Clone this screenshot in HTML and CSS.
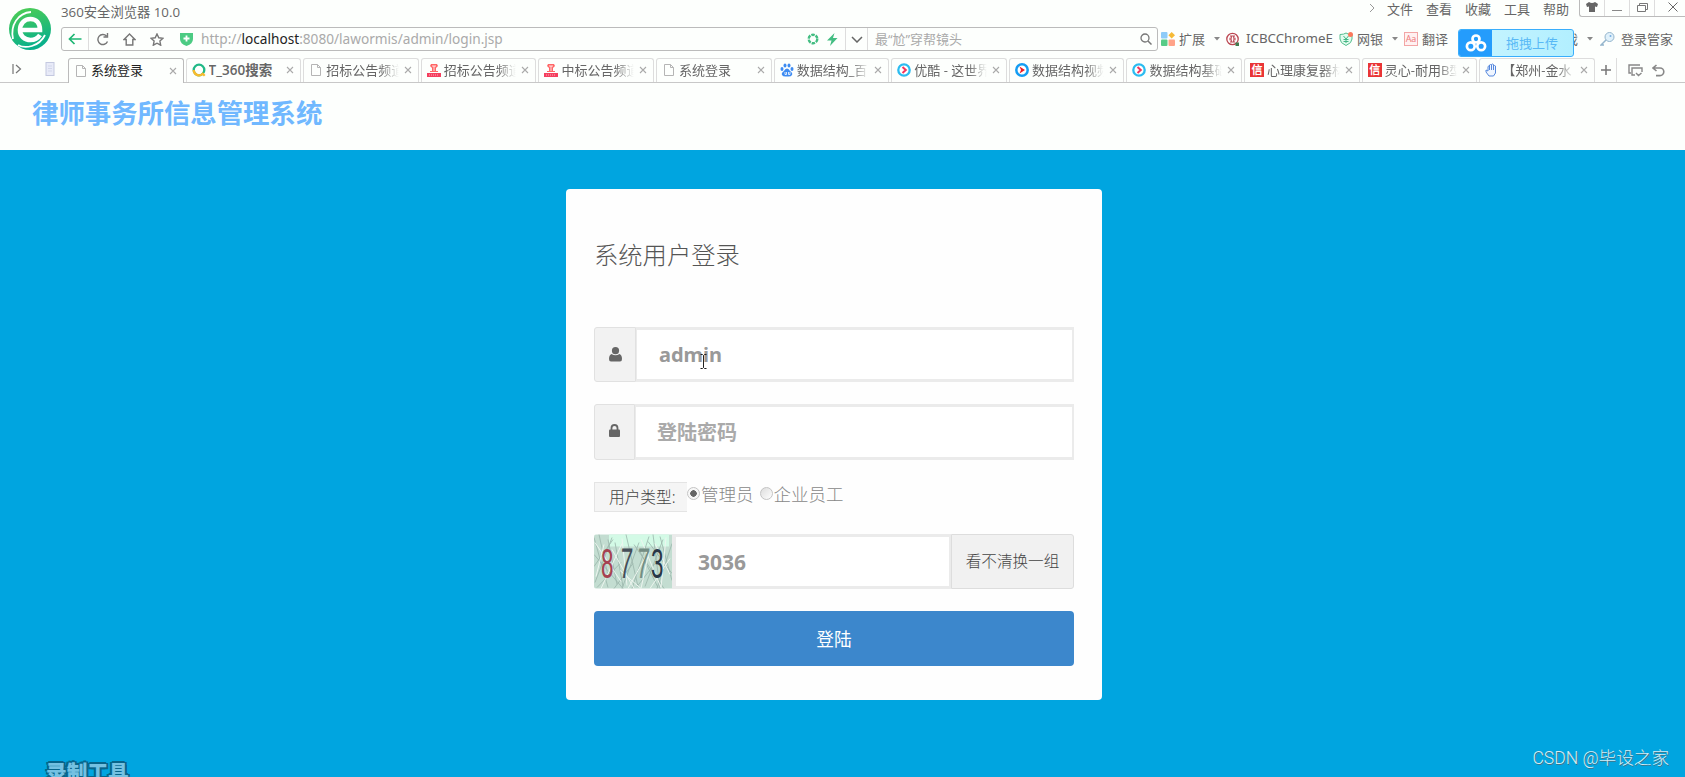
FILE: index.html
```html
<!DOCTYPE html>
<html lang="zh-CN">
<head>
  <meta charset="UTF-8">
  <title>系统登录</title>
  <link rel="stylesheet" href="styles.css">
</head>
<body>
  <svg class="symbols" width="0" height="0">
    <symbol id="page" viewBox="0 0 14 14"><path d="M2.500 1.500h6l3 3v8h-9z M8.500 1.500v3h3" fill="none" stroke="#b5b5b5"/></symbol>
    <symbol id="stamp" viewBox="0 0 14 14"><path d="M4 1h6l1 2-2 2v3h2v1H3V8h2V5L3 3z" fill="#f66"/><path d="M5 3h4M7 3v5" stroke="#fff" stroke-width=".8"/><path d="M0 10h14v4H0z" fill="#f43f5e"/><path d="M2 12h10" stroke="#fab" stroke-dasharray="1 1"/></symbol>
    <symbol id="play" viewBox="0 0 14 14"><circle cx="7" cy="7" r="5.700" fill="#fff" stroke="#2bbcf0" stroke-width="2.300"/><path d="M5.500 4l3.300 3-3.300 3" fill="none" stroke="#f4335c" stroke-width="2"/></symbol>
    <symbol id="play-red" viewBox="0 0 14 14"><circle cx="7" cy="7" r="5.700" fill="#fff" stroke="#149df3" stroke-width="2.500"/><path d="M4.500 3.500L10 7l-5.500 3.500L6 7z" fill="#f01a24"/></symbol>
    <symbol id="close" viewBox="0 0 8 8"><path d="M1 1l6 6M7 1L1 7" stroke="#aaa" stroke-width="1.100"/></symbol>
    <symbol id="caret" viewBox="0 0 6 4"><path d="M0 0h6L3 3.500z" fill="#888"/></symbol>
  </svg>

  <div class="browser">
    <div class="browser-top">
      <svg class="logo" viewBox="0 0 42 42">
        <defs><linearGradient id="green" x1="0" y1="0" x2="0.300" y2="1"><stop offset="0" stop-color="#52cf50"/><stop offset="1" stop-color="#09b08b"/></linearGradient></defs>
        <circle cx="21" cy="21" r="21" fill="url(#green)"/>
        <path d="M11 22H31C31 15 27 11 21.500 11C15 11 11 16 11 22C11 28 15.500 32 21.500 32C26 32 29 30 31 27" fill="none" stroke="#fff" stroke-width="4.600"/>
        <path d="M4 31C1 17 9 5 22 4M9 37C16 41 30 39 36 27" fill="none" stroke="#fff" stroke-width="1.800"/>
      </svg>
      <div class="browser-main">
        <div class="title-row">
          <span class="browser-name">360安全浏览器 10.0</span>
          <div class="menu">
            <svg width="6" height="10" viewBox="0 0 6 10"><path d="M1 1l4 4-4 4" fill="none" stroke="#999"/></svg>
            <span>文件</span><span>查看</span><span>收藏</span><span>工具</span><span>帮助</span>
          </div>
          <div class="window-buttons">
            <span><svg width="12" height="10" viewBox="0 0 12 10"><path d="M3 0q3 2 6 0l3 2-1 3-2-.5V10H3V4.500L1 5 0 2z" fill="#666"/></svg></span>
            <span><svg width="12" height="10" viewBox="0 0 12 10"><path d="M1 8.500h10" stroke="#888"/></svg></span>
            <span><svg width="12" height="10" viewBox="0 0 12 10"><path d="M1.500 3.500h8v6h-8zM3.500 3.500v-2h8v6h-2" fill="none" stroke="#777"/></svg></span>
            <span><svg width="10" height="10" viewBox="0 0 10 10"><path d="M.5.500l9 9M9.500.500l-9 9" stroke="#666"/></svg></span>
          </div>
        </div>

        <div class="address-row">
          <div class="address-bar">
            <span class="nav nav-back"><svg width="14" height="12" viewBox="0 0 14 12"><path d="M13.500 6H1.500M6.500 1L1.500 6l5 5" fill="none" stroke="#1db673" stroke-width="1.700"/></svg></span>
            <span class="nav"><svg width="12" height="13" viewBox="0 0 12 13"><path d="M9.500 3A5 5 0 1 0 10.500 8.500M10.500 0v4h-4" fill="none" stroke="#777" stroke-width="1.400"/></svg></span>
            <span class="nav"><svg width="13" height="13" viewBox="0 0 13 13"><path d="M1 6.500L6.500 1 12 6.500H9.800V12H3.200V6.500z" fill="none" stroke="#777" stroke-width="1.400"/></svg></span>
            <span class="nav"><svg width="14" height="13" viewBox="0 0 14 13"><path d="M7 1l1.800 3.800 4.200.5-3.100 2.800.8 4.100L7 10.200l-3.700 2 .8-4.100L1 5.300l4.200-.5z" fill="none" stroke="#777" stroke-width="1.400"/></svg></span>
            <svg class="shield" width="13" height="14" viewBox="0 0 13 14"><path d="M0 1h13v6q0 5-6.500 7Q0 12 0 7z" fill="#4ccb83"/><path d="M6.500 3.500v6M3.500 6.500h6" stroke="#fff" stroke-width="1.800"/></svg>
            <span class="url">http://<b>localhost</b>:8080/lawormis/admin/login.jsp</span>
            <svg class="turbo" width="12" height="12" viewBox="0 0 12 12"><circle cx="6" cy="6" r="4.300" fill="none" stroke="#43bd82" stroke-width="2.400" stroke-dasharray="3.500 1"/></svg>
            <svg class="bolt" width="11" height="13" viewBox="0 0 11 13"><path d="M7.500 0L0 7.500h4.500L3 13l7.500-8H6z" fill="#43bd82"/></svg>
            <span class="drop"><svg width="12" height="7" viewBox="0 0 12 7"><path d="M1 1l5 5 5-5" fill="none" stroke="#666" stroke-width="1.500"/></svg></span>
            <span class="search-hint">最“尬”穿帮镜头</span>
            <svg class="magnifier" width="12" height="12" viewBox="0 0 12 12"><circle cx="5" cy="5" r="4" fill="none" stroke="#777" stroke-width="1.300"/><path d="M8 8l3.500 3.500" stroke="#777" stroke-width="1.500"/></svg>
          </div>
          <div class="plugins">
            <svg width="14" height="14" viewBox="0 0 14 14"><rect width="6.500" height="6.500" rx="1" fill="#8ecbf8"/><rect y="7.500" width="6.500" height="6.500" rx="1" fill="#57cb87"/><rect x="7.500" y="7.500" width="6.500" height="6.500" rx="1" fill="#ffa389"/><path d="M10.700 0l3.300 3.300-3.300 3.300-3.300-3.300z" fill="#f6ba36"/></svg>
            <span class="plugin">扩展</span>
            <svg class="arrow" width="6" height="4"><use href="#caret"/></svg>
            <svg class="icbc" width="13" height="14" viewBox="0 0 13 14"><circle cx="6.500" cy="7" r="5.700" fill="#fff" stroke="#bb4650" stroke-width="1.300"/><path d="M4 4h5M4 10h5M5.300 4v2.300H3.300M7.700 4v2.300h2M5.300 10V7.700H3.300M7.700 10V7.700h2" fill="none" stroke="#bb4650" stroke-width="1.100"/><path d="M9.500 10.500H13V14H9.500z" fill="#417d50"/></svg>
            <span class="plugin plugin-icbc">ICBCChromeE</span>
            <svg class="bank" width="14" height="14" viewBox="0 0 14 14"><path d="M1 2.500Q5 2.500 7 1q2 1.500 6 1.500V7q0 4-6 6.500Q1 11 1 7z" fill="#e2fbee" stroke="#55be8e"/><path d="M4.500 4L7 7l2.500-3M7 7v4M4.500 7.500h5M4.500 9.500h5" stroke="#45b785" fill="none"/><circle cx="11.500" cy="2.500" r="2.500" fill="#fb795c"/></svg>
            <span class="plugin">网银</span>
            <svg class="arrow bank-arrow" width="6" height="4"><use href="#caret"/></svg>
            <span class="ad-icon">Aa</span>
            <span class="plugin">翻译</span>
            <span class="plugin plugin-game">戏</span>
            <svg class="arrow" width="6" height="4"><use href="#caret"/></svg>
            <svg class="key" width="15" height="14" viewBox="0 0 15 14"><circle cx="9.500" cy="5" r="4.500" fill="#e0f1fb" stroke="#94b5cc"/><circle cx="10.500" cy="4" r="1" fill="#77aee2"/><path d="M6 8l-5 5h3" fill="none" stroke="#94b5cc" stroke-width="1.500"/></svg>
            <span class="plugin plugin-login">登录管家</span>
          </div>
        </div>
      </div>

      <div class="upload">
        <span class="upload-icon"><svg width="22" height="18" viewBox="0 0 22 18"><g fill="none" stroke="#fff" stroke-width="2.700"><circle cx="11" cy="5" r="3.500"/><circle cx="5.800" cy="12.300" r="3.900"/><circle cx="16.200" cy="12.300" r="3.900"/></g></svg></span>
        <span class="upload-text">拖拽上传</span>
      </div>
    </div>

    <div class="tab-row">
      <div class="tab-tools">
        <svg width="10" height="10" viewBox="0 0 10 10"><path d="M1 0v10M4 1l4.500 4L4 9" fill="none" stroke="#777" stroke-width="1.200"/></svg>
        <svg width="10" height="14" viewBox="0 0 10 14"><rect x="1" y=".5" width="8" height="13" fill="#e8ebf8" stroke="#c4c9e0"/><path d="M3 4h4M3 6.500h4M3 9h4" stroke="#d2d7ea"/></svg>
      </div>
      <div class="tabs">
        <div class="tab active"><svg class="fav"><use href="#page"/></svg><span>系统登录</span><svg class="x"><use href="#close"/></svg></div>
        <div class="tab bold"><svg class="fav" viewBox="0 0 14 14"><circle cx="7" cy="7" r="5.300" fill="none" stroke="#20b987" stroke-width="2.300"/><path d="M1.700 7a5.300 5.300 0 0 0 9 3.800l2 2" fill="none" stroke="#f9bb2d" stroke-width="2.300"/></svg><span>T_360搜索</span><svg class="x"><use href="#close"/></svg></div>
        <div class="tab"><svg class="fav"><use href="#page"/></svg><span>招标公告频道</span><svg class="x"><use href="#close"/></svg></div>
        <div class="tab"><svg class="fav"><use href="#stamp"/></svg><span>招标公告频道</span><svg class="x"><use href="#close"/></svg></div>
        <div class="tab"><svg class="fav"><use href="#stamp"/></svg><span>中标公告频道</span><svg class="x"><use href="#close"/></svg></div>
        <div class="tab"><svg class="fav"><use href="#page"/></svg><span>系统登录</span><svg class="x"><use href="#close"/></svg></div>
        <div class="tab"><svg class="fav" viewBox="0 0 14 14"><g fill="#3d8bf2"><ellipse cx="2" cy="6" rx="1.500" ry="2"/><ellipse cx="5" cy="2.500" rx="1.500" ry="2"/><ellipse cx="9" cy="2.500" rx="1.500" ry="2"/><ellipse cx="12" cy="6" rx="1.500" ry="2"/><path d="M7 5.500q2 0 3 2.500 3 2 2 4-1 2-5 1.500-4 .5-5-1.500-1-2 2-4 1-2.500 3-2.500z"/></g><path d="M5 9v2.500h1.500V9M8.500 9v2.500H10V9" fill="none" stroke="#fff" stroke-width=".8"/></svg><span>数据结构_百</span><svg class="x"><use href="#close"/></svg></div>
        <div class="tab"><svg class="fav"><use href="#play"/></svg><span>优酷 - 这世界</span><svg class="x"><use href="#close"/></svg></div>
        <div class="tab"><svg class="fav"><use href="#play-red"/></svg><span>数据结构视频</span><svg class="x"><use href="#close"/></svg></div>
        <div class="tab"><svg class="fav"><use href="#play"/></svg><span>数据结构基础</span><svg class="x"><use href="#close"/></svg></div>
        <div class="tab"><i class="fav letter">信</i><span>心理康复器材</span><svg class="x"><use href="#close"/></svg></div>
        <div class="tab"><i class="fav letter">信</i><span>灵心-耐用B型</span><svg class="x"><use href="#close"/></svg></div>
        <div class="tab last"><svg class="fav" viewBox="0 0 14 14"><path d="M4 13L1 9V7l2 1V3.500q1-1 1.500 0V7 2q1-1 2 0v5V1.500q1-1 2 0V7 3q1-1 2 0v7l-2 3z" fill="#eff6ff" stroke="#5688dc"/></svg><span>【郑州-金水</span><svg class="x"><use href="#close"/></svg></div>
      </div>
      <span class="new-tab"><svg width="10" height="10" viewBox="0 0 10 10"><path d="M5 0v10M0 5h10" stroke="#777" stroke-width="1.500"/></svg></span>
      <div class="tab-actions">
        <svg width="15" height="13" viewBox="0 0 15 13"><path d="M3 9H1V1h11M7 11H4V4h10v4M8 9l2.500 2.500L13.500 9" fill="none" stroke="#888" stroke-width="1.400"/></svg>
        <svg width="13" height="13" viewBox="0 0 13 13"><path d="M4.500 1L1 4l3.500 3M1.500 4H8a3.800 3.800 0 0 1 0 7.600H4" fill="none" stroke="#888" stroke-width="1.600"/></svg>
      </div>
    </div>
  </div>

  <header class="site-header"><h1>律师事务所信息管理系统</h1></header>

  <main class="login-page">
    <form class="login-card">
      <h2>系统用户登录</h2>
      <div class="input-group user-group">
        <span class="addon"><svg width="13" height="15" viewBox="0 0 13 15"><circle cx="6.500" cy="3.700" r="3.600"/><path d="M2.500 7Q6.500 9.500 10.500 7q2.500 1 2.500 5 0 2.500-2 2.500H2q-2 0-2-2.500Q0 8 2.500 7z"/></svg></span>
        <input type="text" value="admin">
      </div>
      <div class="input-group pass-group">
        <span class="addon"><svg width="11" height="13" viewBox="0 0 11 13"><path d="M2.500 6V4a3 3 0 0 1 6 0v2" fill="none" stroke="#666" stroke-width="1.800"/><rect y="5.500" width="11" height="7.500" rx="1"/></svg></span>
        <input type="password" placeholder="登陆密码">
      </div>
      <div class="type-group">
        <span class="type-label">用户类型:</span>
        <label><i class="radio checked"></i>管理员</label>
        <label><i class="radio"></i>企业员工</label>
      </div>
      <div class="input-group code-group">
        <svg class="captcha" viewBox="0 0 78 54">
          <rect width="78" height="54" fill="#c3ddd1"/>
          <rect x="15" width="60" height="12" fill="#d3fae6"/>
          <path d="M0 3l14 50M5 0l9 41M1 48L18 3M14 5l9 45M0 20l29 34M21 8l8 44M28 54L45 8M32 0l12 52M38 54L55 2M45 15l19 38M51 52L69 5M59 0l7 54M63 54L78 9M66 2l12 44M3 53L27 28M20 54l19-25M43 52l18-23M0 32l19-27M54 7l24 32M40 10l30 44" stroke="#9bb5ab" fill="none" stroke-width=".8"/>
          <path d="M2 42l8-32M7 54l21-45M18 15l22 39M26 36l21 18M34 54l19-34M47 54l8-37M56 54l20-30M61 9l15 31M1 8l26 39M28 4l5 47M47 5l20 48M72 3l-5 50" stroke="#edf5ef" fill="none"/>
          <g class="captcha-text">
            <text transform="translate(7 43) scale(.52 1)" fill="#a74150">8</text>
            <text transform="translate(25 43) skewX(-4) scale(.52 1)" fill="#454e58">7</text>
            <text transform="translate(42 43) skewX(-4) scale(.52 1)" fill="#738d83">7</text>
            <text transform="translate(57 43) scale(.52 1)" fill="#293747">3</text>
          </g>
        </svg>
        <input type="text" value="3036">
        <button class="change-code" type="button">看不清换一组</button>
      </div>
      <button class="login-button" type="button">登陆</button>
      <svg class="cursor" width="7" height="15" viewBox="0 0 7 15"><path d="M.5.500h2l1 1 1-1h2M3.500 1.500v12M.5 14.500h2l1-1 1 1h2" fill="none" stroke="#222"/></svg>
    </form>
    <span class="recorder">录制工具</span>
    <span class="watermark">CSDN @毕设之家</span>
  </main>
</body>
</html>
```
FILE: styles.css
```css
* {
  box-sizing: border-box;
}

body {
  margin: 0;
  height: 777px;
  overflow: hidden;
  display: flex;
  flex-direction: column;
  font-family: "Noto Sans", "Noto Sans CJK SC", sans-serif;
  background: #fdfffd;
  color: #666;
}

svg {
  display: block;
  flex: none;
}

.symbols {
  position: absolute;
}

/* Browser window */
.browser {
  height: 83px;
  font-family: "Open Sans", "Noto Sans CJK SC", sans-serif;
  font-size: 13px;
  white-space: nowrap;
}

.browser-top {
  position: relative;
  display: flex;
  height: 58px;
  padding-left: 9px;
}

.logo {
  width: 42px;
  height: 42px;
  margin-top: 8px;
}

.browser-main {
  flex: 1;
  margin-left: 10px;
}

.title-row {
  display: flex;
  height: 27px;
}

.browser-name {
  font-size: 13.300px;
  line-height: 24px;
}

.menu {
  display: flex;
  align-items: center;
  gap: 13px;
  height: 16px;
  margin-left: auto;
}

.menu svg {
  margin-right: -1px;
}

.window-buttons {
  display: flex;
  width: 106px;
  height: 17px;
  margin-left: 10px;
  border: solid #bbb;
  border-width: 0 0 1px 1px;
  border-radius: 0 0 0 3px;
}

.window-buttons span {
  display: flex;
  align-items: center;
  justify-content: center;
  width: 25px;
  padding-bottom: 2px;
  border-right: 1px solid #ddd;
}

.window-buttons span:last-child {
  flex: 1;
  border: 0;
  padding-left: 6px;
}

.address-row {
  display: flex;
  height: 24px;
}

.address-bar {
  display: flex;
  align-items: center;
  width: 1097px;
  border: 1px solid #bbb;
  border-radius: 3px;
}

.nav {
  display: flex;
  align-items: center;
  justify-content: center;
  width: 27px;
  height: 100%;
}

.nav-back {
  border-right: 1px solid #ddd;
}

.shield {
  margin-left: 10px;
}

.url {
  flex: 1;
  margin-left: 8px;
  font-family: "Noto Sans", sans-serif;
  font-size: 13.650px;
  line-height: 22px;
  color: #aaa;
}

.url b {
  font-weight: 400;
  color: #222;
}

.bolt {
  margin: 0 7px 0 8px;
}

.drop {
  display: flex;
  align-items: center;
  justify-content: center;
  width: 23px;
  height: 100%;
  border: solid #ddd;
  border-width: 0 1px;
}

.search-hint {
  width: 265px;
  padding: 0 0 2px 7px;
  color: #aaa;
}

.magnifier {
  margin: 0 5px 0 7px;
}

.plugins {
  display: flex;
  align-items: center;
  flex: 1;
  margin-left: 3px;
}

.plugin {
  margin-left: 4px;
  padding-bottom: 2px;
}

.arrow {
  margin-left: 9px;
}

.icbc {
  margin-left: 6px;
}

.plugin-icbc {
  width: 90px;
  margin-left: 7px;
  font-family: "Noto Sans", sans-serif;
  font-size: 13.300px;
}

.bank {
  margin-left: 3px;
}

.ad-icon {
  width: 14px;
  height: 14px;
  margin-left: 6px;
  border: 1px solid #f2a6a6;
  font-size: 9px;
  line-height: 12px;
  text-align: center;
  color: #ed7777;
  background: #fff1f1;
}

.plugin-game {
  margin-left: 117px;
}

.key {
  margin-left: 7px;
}

.plugin-login {
  margin-left: 6px;
}

/* floats over the toolbar */
.upload {
  position: absolute;
  left: 1458px;
  top: 29px;
  display: flex;
  width: 116px;
  height: 28px;
  border: 1px solid #39aefc;
  border-radius: 3px;
  overflow: hidden;
  background: linear-gradient(90deg, #c9f5ff, #b2efff);
  color: #58b9f6;
}

.upload-icon {
  display: flex;
  align-items: center;
  justify-content: center;
  width: 33px;
  background: #249cfc;
}

.upload-text {
  padding-left: 14px;
  line-height: 27px;
}

/* Tabs */
.tab-row {
  display: flex;
  height: 25px;
  border-bottom: 1px solid #c8c8c8;
}

.tab-tools {
  display: flex;
  align-items: center;
  gap: 23px;
  width: 68px;
  padding-left: 12px;
  padding-bottom: 3px;
}

.tabs {
  display: flex;
  width: 1527px;
}

.tab {
  display: flex;
  align-items: center;
  flex: 1;
  min-width: 0;
  margin-right: 2px;
  padding: 0 6px 1px 5px;
  border: 1px solid #ddd;
  border-bottom: 0;
  border-radius: 3px 3px 0 0;
}

.tab span {
  flex: 1;
  overflow: hidden;
  margin: 0 5px 0 3px;
  padding-bottom: 2px;
  mask-image: linear-gradient(90deg, #000 75%, transparent);
}

.tab.active {
  height: 25px;
  border-color: #bbb;
  background: #fdfffd;
  color: #222;
}

.tab.active span,
.tab.bold span {
  mask-image: none;
}

.tab.bold {
  font-weight: 600;
}

.tab.bold span {
  font-size: 13.500px;
}

.tab.last {
  margin-right: 0;
}

.fav {
  flex: none;
  width: 14px;
  height: 14px;
}

.letter {
  background: #e93536;
  color: #fff;
  font-size: 11px;
  font-style: normal;
  font-weight: 700;
  line-height: 13px;
  text-align: center;
}

.x {
  width: 8px;
  height: 8px;
}

.new-tab {
  display: flex;
  align-items: center;
  justify-content: center;
  width: 22px;
  border-right: 1px solid #ddd;
}

.tab-actions {
  display: flex;
  align-items: center;
  gap: 9px;
  padding-left: 11px;
}

/* Page header */
.site-header {
  height: 67px;
  padding: 11px 32px;
  background: #fdfffd;
}

.site-header h1 {
  margin: 0;
  font-size: 26.400px;
  font-weight: 700;
  line-height: 38px;
  color: #70b8ff;
}

/* Login page */
.login-page {
  position: relative;
  flex: 1;
  padding-top: 39px;
  background: #00a5e0;
}

.login-card {
  position: relative;
  width: 536px;
  height: 511px;
  margin-left: 566px;
  padding: 48px 28px 0;
  border-radius: 4px;
  background: #fefefe;
}

.login-card h2 {
  margin: 0 0 55px;
  font-size: 24.300px;
  font-weight: 300;
  line-height: 35px;
  color: #555;
}

.input-group {
  display: flex;
  height: 55px;
}

.addon {
  display: flex;
  align-items: center;
  justify-content: center;
  width: 42px;
  border: 1px solid #e1e1e1;
  border-radius: 3px 0 0 3px;
  background: #f2f2f2;
  fill: #666;
}

.input-group input {
  flex: 1;
  min-width: 0;
  padding: 0 22px;
  border: solid #ebebeb;
  border-width: 3px 2px 3px 1px;
  outline: none;
  background: #fff;
  font-family: inherit;
  font-size: 20px;
  font-weight: 700;
  color: #999;
}

.input-group input::placeholder {
  color: #aaa;
}

.pass-group {
  height: 56px;
  margin-top: 22px;
}

.pass-group .addon {
  width: 41px;
  padding-bottom: 4px;
}

.pass-group input {
  padding-left: 21px;
}

.type-group {
  display: flex;
  height: 30px;
  margin: 22px 0;
}

.type-label {
  width: 93px;
  padding-left: 14px;
  border: 1px solid #e4e4e4;
  border-right: 0;
  background: #f5f5f5;
  font-size: 15.700px;
  font-weight: 300;
  line-height: 28px;
  color: #444;
}

.type-group label {
  display: flex;
  align-items: center;
  height: 23px;
  margin-right: 6px;
  font-size: 17.500px;
  font-weight: 300;
  color: #888;
}

.radio {
  width: 13px;
  height: 13px;
  margin-right: 1px;
  border: 1px solid #c4c4c4;
  border-radius: 50%;
  background: linear-gradient(135deg, #ddd, #fff);
}

.radio.checked {
  background: radial-gradient(#666 0 3px, #f7f7f7 3.500px);
}

.captcha {
  width: 78px;
  height: 55px;
  border-radius: 3px 0 0 3px;
}

.captcha-text {
  font-family: "Liberation Sans", sans-serif;
  font-size: 43px;
}

.input-group.code-group input {
  border-left-width: 4px;
  font-size: 21px;
}

.change-code {
  width: 123px;
  padding-bottom: 3px;
  border: 1px solid #ddd;
  border-radius: 0 3px 3px 0;
  background: #f1f1f1;
  font-family: inherit;
  font-size: 15.600px;
  font-weight: 300;
  color: #444;
}

.login-button {
  display: block;
  width: 100%;
  height: 55px;
  margin-top: 22px;
  padding-bottom: 2px;
  border: 0;
  border-radius: 4px;
  background: #3c87cc;
  font-family: inherit;
  font-size: 17.700px;
  color: #fff;
}

.cursor {
  position: absolute;
  left: 134px;
  top: 165px;
}

.recorder {
  position: absolute;
  left: 46px;
  top: 607px;
  font-size: 20.700px;
  font-weight: 900;
  line-height: 30px;
  color: #74c1e2;
  text-shadow: -2px -1px #08658b, 2px -1px #08658b, -1px 2px #08658b, 2px 2px #08658b, 0 -2px #08658b;
}

.watermark {
  position: absolute;
  right: 16px;
  bottom: 6px;
  font-family: Roboto, "Noto Sans CJK SC", sans-serif;
  font-size: 17.600px;
  font-weight: 300;
  line-height: 26px;
  color: #d5ebf4;
  text-shadow: 1px 1px #42758a;
}
```
